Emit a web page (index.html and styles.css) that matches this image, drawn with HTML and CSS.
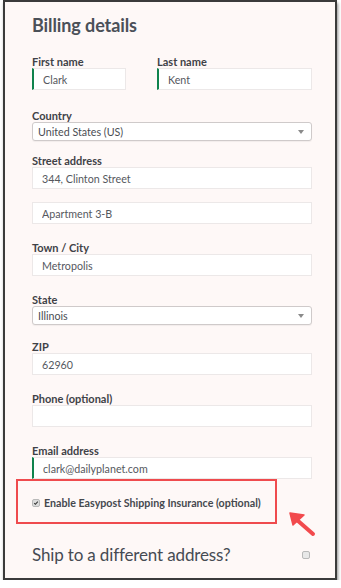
FILE: index.html
```html
<!DOCTYPE html>
<html lang="en">
<head>
    <meta charset="UTF-8">
    <meta name="viewport" content="width=device-width, initial-scale=1.0">
    <title>Billing details</title>
    <link rel="stylesheet" href="styles.css">
</head>
<body>
<div class="frame">
    <h3 class="title">Billing details</h3>

    <div class="form-row name-row">
        <div class="col first">
            <label>First name</label>
            <input type="text" class="valid" value="Clark">
        </div>
        <div class="col last">
            <label>Last name</label>
            <input type="text" class="valid" value="Kent">
        </div>
    </div>

    <div class="form-row select-row">
        <label>Country</label>
        <div class="select">United States (US)</div>
    </div>

    <div class="form-row">
        <label>Street address</label>
        <input type="text" class="line-one" value="344, Clinton Street">
        <input type="text" value="Apartment 3-B">
    </div>

    <div class="form-row">
        <label>Town / City</label>
        <input type="text" value="Metropolis">
    </div>

    <div class="form-row select-row state-row">
        <label>State</label>
        <div class="select">Illinois</div>
    </div>

    <div class="form-row">
        <label>ZIP</label>
        <input type="text" value="62960">
    </div>

    <div class="form-row">
        <label>Phone (optional)</label>
        <input type="text" value="">
    </div>

    <div class="form-row email-row">
        <label>Email address</label>
        <input type="text" class="valid" value="clark@dailyplanet.com">
    </div>

    <div class="highlight">
        <span class="checkbox checked">
            <svg width="8" height="8" viewBox="0 0 8 8"><path d="M1.6 4.2 L3.2 5.8 L6.4 2.2" fill="none" stroke="#333" stroke-width="1.4"/></svg>
        </span>
        <span class="check-label">Enable Easypost Shipping Insurance (optional)</span>
    </div>

    <svg class="arrow" width="34" height="30" viewBox="0 0 34 30">
        <path d="M26 25 L10 11" stroke="#f24a4d" stroke-width="4" stroke-linecap="round"/>
        <path d="M3 4 L17 6 L6 16 Z" fill="#f24a4d" stroke="#f24a4d" stroke-width="1.5" stroke-linejoin="round"/>
    </svg>

    <div class="ship-row">
        <h3 class="ship-title">Ship to a different address?</h3>
        <span class="checkbox"></span>
    </div>
</div>
</body>
</html>
```

FILE: styles.css
```css
body {
    margin: 0;
    font-family: Lato, "Open Sans", sans-serif;
    background-color: #ffffff;
}
.frame {
    position: relative;
    box-sizing: border-box;
    width: 334px;
    height: 580px;
    margin-left: 3px;
    border: 2px solid #3b3b3b;
    background-color: #fef8f7;
    box-shadow: 1px 3px 3px rgba(0, 0, 0, 0.45);
    padding: 12px 23px 0 27px;
    color: #43454b;
}
.title {
    margin: 0 0 20px;
    font-size: 18px;
    line-height: 22px;
    font-weight: 700;
    letter-spacing: -0.1px;
    color: #4b5058;
}
label {
    display: block;
    font-size: 11px;
    line-height: 12px;
    font-weight: 700;
    color: #3f4247;
}
input {
    display: block;
    box-sizing: border-box;
    width: 100%;
    height: 22px;
    margin: 0;
    padding: 0 0 0 9px;
    border: 1px solid #ece8e8;
    background-color: #ffffff;
    font-family: Lato, sans-serif;
    font-size: 10.7px;
    color: #55585e;
    outline: none;
}
input.valid {
    border-left: 2px solid #0f834d;
}
input.line-one {
    margin-bottom: 13px;
}
.form-row {
    margin-bottom: 18px;
}
.name-row {
    display: flex;
    gap: 31px;
    margin-bottom: 20px;
}
.name-row .first {
    width: 94px;
}
.name-row .last {
    flex: 1;
}
.select-row {
    margin-bottom: 14px;
}
.state-row {
    margin-bottom: 16px;
}
.select {
    position: relative;
    box-sizing: border-box;
    height: 19px;
    padding-left: 5px;
    border: 1px solid #cfcaca;
    border-radius: 3px;
    background-color: #ffffff;
    box-shadow: 0 1px 1px rgba(0, 0, 0, 0.05);
    font-size: 10.7px;
    line-height: 17px;
    color: #4a4d53;
}
.select::after {
    content: "";
    position: absolute;
    right: 7px;
    top: 7px;
    border-left: 3px solid transparent;
    border-right: 3px solid transparent;
    border-top: 4px solid #8a8a8a;
}
.email-row {
    margin-bottom: 0;
}
.highlight {
    display: flex;
    align-items: center;
    gap: 4px;
    box-sizing: border-box;
    width: 261px;
    height: 45px;
    margin: 0 0 0 -16px;
    padding: 2px 0 0 14px;
    border: 2px solid #ef4b4e;
}
.checkbox {
    display: inline-flex;
    align-items: center;
    justify-content: center;
    box-sizing: border-box;
    width: 8px;
    height: 8px;
    border: 1px solid #b9b9b9;
    border-radius: 2px;
    background-color: #e8e8e8;
}
.checkbox.checked {
    background-color: #dcdcdc;
}
.check-label {
    font-size: 10.7px;
    font-weight: 700;
    color: #45484e;
}
.arrow {
    position: absolute;
    left: 282px;
    top: 507px;
}
.ship-row {
    display: flex;
    align-items: center;
    justify-content: space-between;
    margin-top: 19px;
    padding-right: 2px;
}
.ship-title {
    margin: 0;
    font-size: 17px;
    line-height: 24px;
    font-weight: 400;
    letter-spacing: -0.15px;
    color: #464b53;
}
```
